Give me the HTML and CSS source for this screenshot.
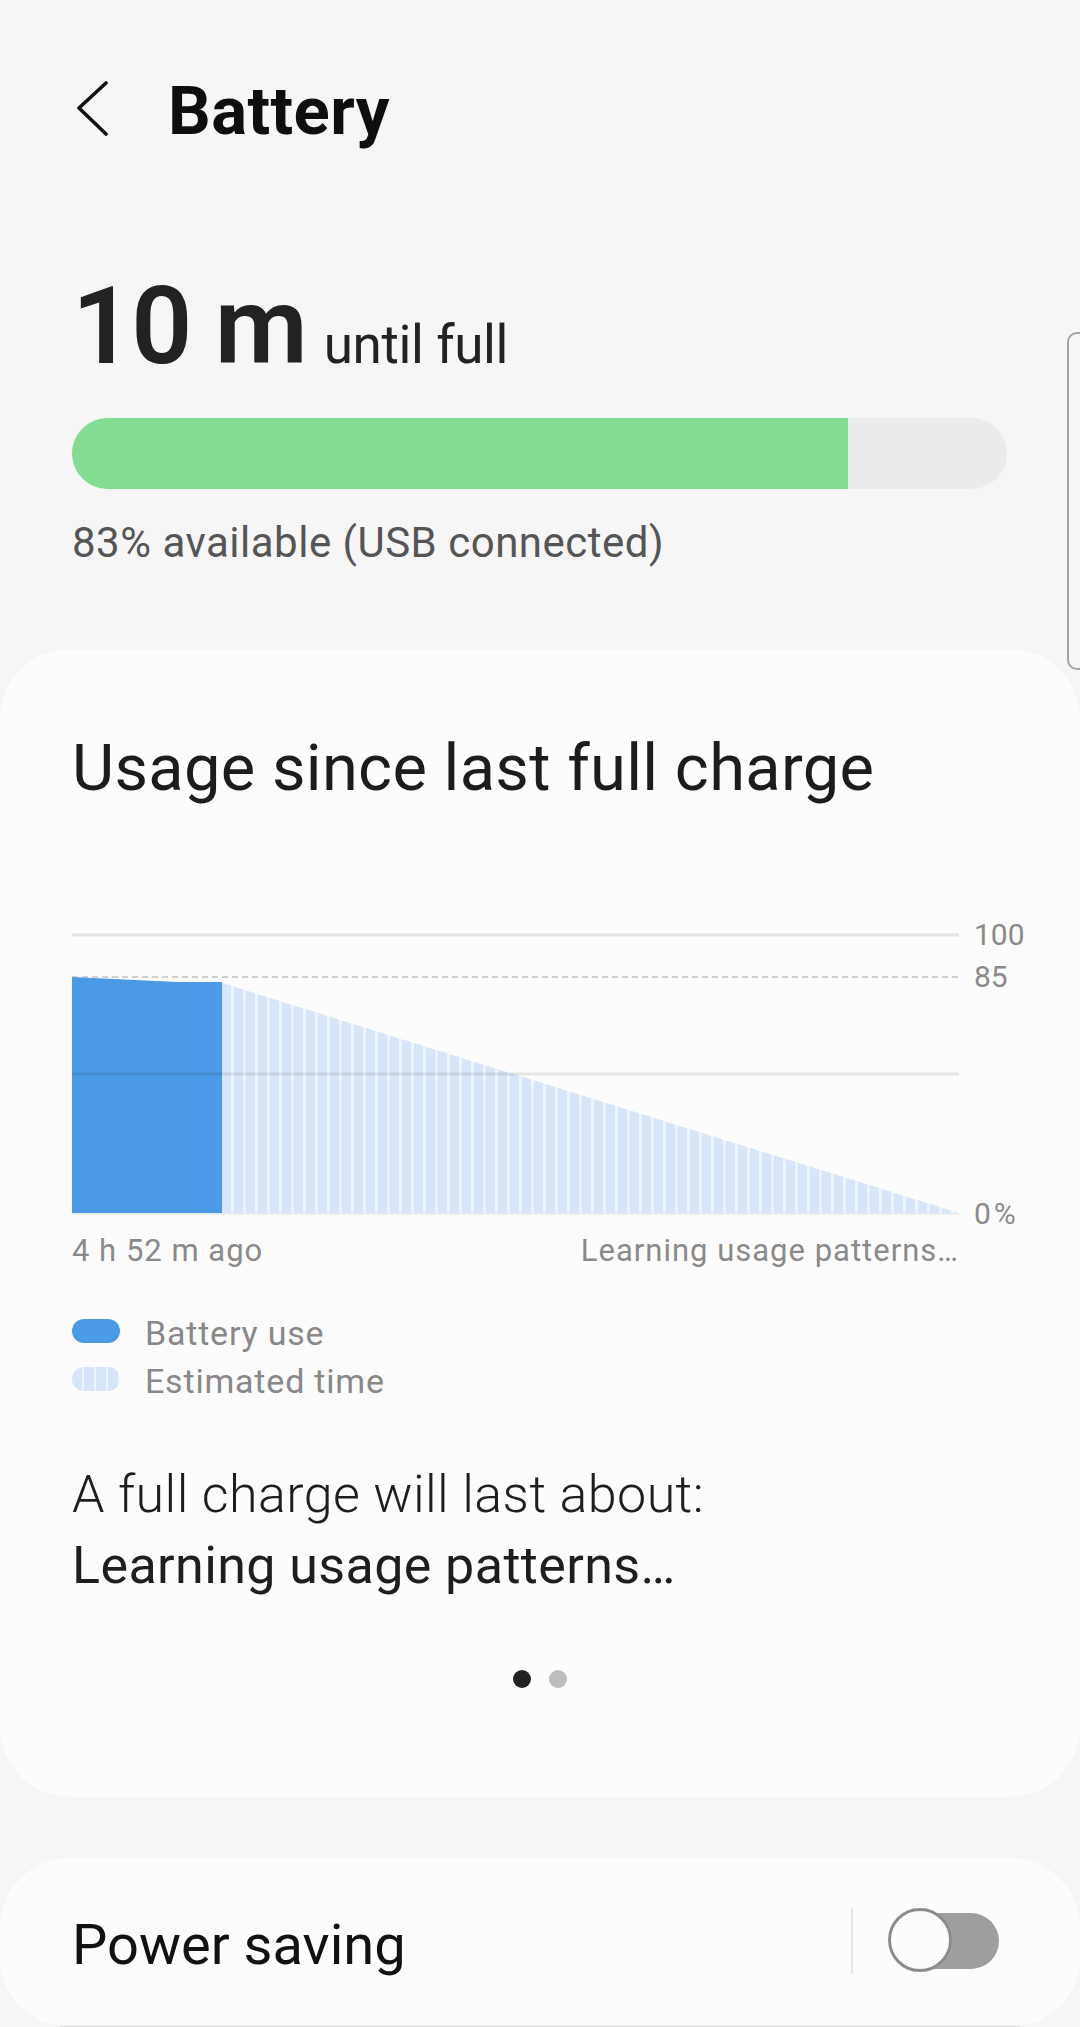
FILE: index.html
```html
<!DOCTYPE html>
<html lang="en">
<head>
    <meta charset="UTF-8">
    <meta name="viewport" content="width=device-width, initial-scale=1.0">
    <title>Battery</title>
    <link rel="stylesheet" href="styles.css">
</head>
<body>

<header class="topbar">
    <svg class="back" width="34" height="56" viewBox="0 0 34 56">
        <polyline points="30,2 3,27 30,53" fill="none" stroke="#111" stroke-width="3.6" stroke-linecap="round" stroke-linejoin="round"/>
    </svg>
    <h1>Battery</h1>
</header>

<div class="scroll-thumb"></div>

<section class="summary">
    <div class="remaining"><span class="big">10 m</span><span class="small">until full</span></div>
    <div class="level"><div class="level-fill" style="width: 83%"></div></div>
    <p class="status">83% available (USB connected)</p>
</section>

<section class="card usage">
    <h2>Usage since last full charge</h2>

    <svg class="chart" width="960" height="315" viewBox="0 0 960 315">
        <defs>
            <pattern id="stripes" x="150" y="0" width="12" height="10" patternUnits="userSpaceOnUse">
                <rect x="0" y="0" width="9" height="10" fill="#d6e5f7"/>
                <rect x="9" y="0" width="3" height="10" fill="#eef4fc"/>
            </pattern>
        </defs>
        <line x1="0" y1="62" x2="887" y2="62" stroke="#d0d0d0" stroke-width="2" stroke-dasharray="6 4"/>
        <polygon points="150,68 887,298 150,298" fill="url(#stripes)"/>
        <polygon points="0,62 105,67 150,67 150,298 0,298" fill="#4b9ae5"/>
        <line x1="0" y1="20" x2="887" y2="20" stroke="#e4e4e4" stroke-width="3"/>
        <line x1="0" y1="159" x2="887" y2="159" stroke="rgba(0,0,0,0.09)" stroke-width="3"/>
        <line x1="0" y1="299" x2="887" y2="299" stroke="rgba(0,0,0,0.06)" stroke-width="2"/>
        <text class="axis" x="902" y="30">100</text>
        <text class="axis" x="902" y="72">85</text>
        <text class="axis pct" x="902" y="309">0%</text>
    </svg>

    <div class="chart-times">
        <span>4 h 52 m ago</span>
        <span>Learning usage patterns…</span>
    </div>

    <ul class="legend">
        <li><span class="swatch used"></span>Battery use</li>
        <li><span class="swatch estimated"></span>Estimated time</li>
    </ul>

    <div class="estimate">
        <p class="estimate-label">A full charge will last about:</p>
        <p class="estimate-value">Learning usage patterns…</p>
    </div>

    <div class="pager">
        <span class="dot active"></span>
        <span class="dot"></span>
    </div>
</section>

<section class="card saving">
    <div class="setting-row">
        <span class="setting-name">Power saving</span>
        <span class="divider"></span>
        <span class="switch">
            <span class="switch-track"></span>
            <span class="switch-knob"></span>
        </span>
    </div>
    <div class="row-line"></div>
</section>

</body>
</html>
```

FILE: styles.css
```css
body {
    font-family: Roboto, "Noto Sans", sans-serif;
    background-color: #f6f6f6;
    margin: 0;
    padding: 0;
    width: 1080px;
    height: 2027px;
    overflow: hidden;
    position: relative;
    color: #111;
}

/* Header */
.topbar {
    display: flex;
    align-items: flex-start;
    padding: 73px 0 0 76px;
}

.back {
    margin-top: 8px;
}

h1 {
    margin: 0 0 0 58px;
    font-size: 67px;
    line-height: 76px;
    font-weight: 700;
    color: #0e0e0e;
    letter-spacing: 0.4px;
}

.scroll-thumb {
    position: absolute;
    left: 1067px;
    top: 332px;
    width: 24px;
    height: 334px;
    border: 2px solid #a3a3a3;
    border-radius: 10px;
}

/* Charging summary */
.summary {
    padding: 0 73px 0 72px;
}

.remaining {
    margin-top: 118px;
    font-size: 107px;
    line-height: 120px;
    color: #222;
}

.remaining .big {
    font-weight: 600;
    letter-spacing: -2px;
}

.remaining .small {
    font-size: 53px;
    line-height: 1;
    letter-spacing: -0.4px;
    margin-left: 18px;
}

.level {
    margin-top: 31px;
    height: 71px;
    border-radius: 36px;
    background-color: #ebebeb;
    overflow: hidden;
}

.level-fill {
    height: 100%;
    background-color: #82dd92;
}

.status {
    margin: 29px 0 0;
    font-size: 42px;
    line-height: 50px;
    color: #555;
    letter-spacing: 0.5px;
}

/* Cards */
.card {
    background-color: #fcfcfc;
    border-radius: 70px;
}

.usage {
    margin-top: 81px;
    padding: 81px 48px 108px 72px;
    height: 959px;
}

h2 {
    margin: 0;
    font-size: 65px;
    line-height: 76px;
    font-weight: 400;
    color: #1c1c1c;
    letter-spacing: 0.3px;
}

.chart {
    display: block;
    margin-top: 109px;
}

.axis {
    font-family: Roboto, sans-serif;
    font-size: 30px;
    fill: #8a8a8a;
}

.axis.pct {
    letter-spacing: 3px;
}

.chart-times {
    width: 887px;
    margin-top: 3px;
    display: flex;
    justify-content: space-between;
    font-size: 31px;
    line-height: 36px;
    letter-spacing: 1px;
    color: #8a8a8a;
}

.legend {
    list-style: none;
    margin: 40px 0 0;
    padding: 0;
}

.legend li {
    display: flex;
    align-items: center;
    font-size: 34px;
    line-height: 48px;
    letter-spacing: 0.8px;
    color: #888;
}

.swatch {
    width: 48px;
    height: 24px;
    border-radius: 12px;
    margin: -4px 25px 0 0;
}

.swatch.used {
    background-color: #4b9ae5;
}

.swatch.estimated {
    background: repeating-linear-gradient(90deg, #d6e5f7 0 10px, #eef4fc 10px 12px);
}

.estimate {
    margin-top: 54px;
}

.estimate p {
    margin: 0;
    font-size: 52px;
    line-height: 71px;
    color: #1e1e1e;
    letter-spacing: 0.4px;
}

.estimate-label {
    font-weight: 300;
}

.pager {
    margin-top: 69px;
    display: flex;
    justify-content: center;
    gap: 18px;
    margin-left: -24px;
}

.dot {
    width: 18px;
    height: 18px;
    border-radius: 50%;
    background-color: #bdbdbd;
}

.dot.active {
    background-color: #222;
}

/* Power saving */
.saving {
    margin-top: 61px;
    padding-top: 54px;
    height: 115px;
}

.setting-row {
    display: flex;
    align-items: flex-start;
    padding: 0 81px 0 72px;
}

.setting-name {
    flex: 1;
    font-size: 56px;
    line-height: 66px;
    color: #111;
    letter-spacing: 0;
}

.divider {
    width: 2px;
    height: 66px;
    margin-top: -4px;
    background-color: #e6e6e6;
    margin-right: 35px;
}

.switch {
    position: relative;
    width: 111px;
    height: 64px;
    margin-top: -4px;
}

.switch-track {
    position: absolute;
    left: 8px;
    right: 0;
    top: 5px;
    height: 56px;
    border-radius: 28px;
    background-color: #9e9e9e;
}

.switch-knob {
    position: absolute;
    left: 0;
    top: 0;
    width: 58px;
    height: 58px;
    border: 3px solid #8c8c8c;
    border-radius: 50%;
    background-color: #fcfcfc;
}

.row-line {
    margin: 47px 60px 0;
    height: 2px;
    background-color: #e8e8e8;
}
```
